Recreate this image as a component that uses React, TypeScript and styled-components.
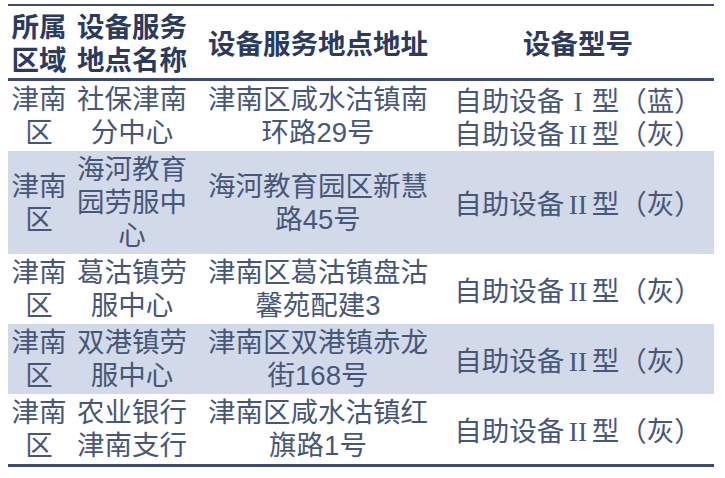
import React from 'react';
import styled, { createGlobalStyle } from 'styled-components';

const GlobalStyle = createGlobalStyle`
  html, body {
    margin: 0;
    padding: 0;
    background: #ffffff;
  }
`;

type Row = {
  area: string;
  name: string;
  address: string;
  models: string[];
  shaded?: boolean;
};

const rows: Row[] = [
  {
    area: '津南\n区',
    name: '社保津南\n分中心',
    address: '津南区咸水沽镇南\n环路29号',
    models: ['Ⅰ（蓝）', 'Ⅱ（灰）'],
  },
  {
    area: '津南\n区',
    name: '海河教育\n园劳服中\n心',
    address: '海河教育园区新慧\n路45号',
    models: ['Ⅱ（灰）'],
    shaded: true,
  },
  {
    area: '津南\n区',
    name: '葛沽镇劳\n服中心',
    address: '津南区葛沽镇盘沽\n馨苑配建3',
    models: ['Ⅱ（灰）'],
  },
  {
    area: '津南\n区',
    name: '双港镇劳\n服中心',
    address: '津南区双港镇赤龙\n街168号',
    models: ['Ⅱ（灰）'],
    shaded: true,
  },
  {
    area: '津南\n区',
    name: '农业银行\n津南支行',
    address: '津南区咸水沽镇红\n旗路1号',
    models: ['Ⅱ（灰）'],
  },
];

const ModelLine = ({ model }: { model: string }) => {
  const numeral = model[0] === 'Ⅰ' ? 'I' : 'II';
  const suffix = model.slice(1);
  return (
    <S.ModelLine>
      自助设备<S.Numeral>{numeral}</S.Numeral>型{suffix}
    </S.ModelLine>
  );
};

const App = () => {
  return (
    <S.Page>
      <GlobalStyle />
      <S.Table>
        <colgroup>
          <col style={{ width: 62 }} />
          <col style={{ width: 124 }} />
          <col style={{ width: 248 }} />
          <col style={{ width: 272 }} />
        </colgroup>
        <thead>
          <tr>
            <S.HeadCell>{'所属\n区域'}</S.HeadCell>
            <S.HeadCell>{'设备服务\n地点名称'}</S.HeadCell>
            <S.HeadCell>设备服务地点地址</S.HeadCell>
            <S.HeadCell>设备型号</S.HeadCell>
          </tr>
        </thead>
        <tbody>
          {rows.map((row, i) => (
            <S.BodyRow key={i} $shaded={row.shaded}>
              <S.Cell>{row.area}</S.Cell>
              <S.Cell>{row.name}</S.Cell>
              <S.Cell>{row.address}</S.Cell>
              <S.Cell>
                {row.models.map((m, j) => (
                  <ModelLine key={j} model={m} />
                ))}
              </S.Cell>
            </S.BodyRow>
          ))}
        </tbody>
      </S.Table>
    </S.Page>
  );
};

const S = {
  Page: styled.div`
    width: 725px;
    height: 478px;
    box-sizing: border-box;
    padding: 4px 11px 0 8px;
    background: #ffffff;
    overflow: hidden;
  `,
  Table: styled.table`
    width: 706px;
    table-layout: fixed;
    border-collapse: collapse;
    border-top: 2px solid #3d4b72;
    border-bottom: 3px solid #3d4b72;
    font-family: 'Liberation Sans', 'Noto Sans CJK SC', sans-serif;
  `,
  HeadCell: styled.th`
    padding: 3px 0;
    font-size: 27.5px;
    line-height: 33px;
    font-weight: 700;
    color: #2b3a5e;
    text-align: center;
    vertical-align: middle;
    white-space: pre-line;
    border-bottom: 3px solid #3d4b72;
    font-family: 'Noto Sans CJK SC', sans-serif;
  `,
  BodyRow: styled.tr<{ $shaded?: boolean }>`
    background: ${({ $shaded }) => ($shaded ? '#d2d9e8' : '#ffffff')};
  `,
  Cell: styled.td`
    padding: 2px 0;
    font-size: 27.5px;
    line-height: 33px;
    font-weight: 400;
    color: #46577a;
    text-align: center;
    vertical-align: middle;
    white-space: pre-line;
  `,
  ModelLine: styled.div`
    line-height: 33px;
    white-space: nowrap;
    font-family: 'Noto Sans CJK SC', sans-serif;
  `,
  Numeral: styled.span`
    display: inline-block;
    width: 1em;
    line-height: 1;
    text-align: center;
    font-family: 'Liberation Serif', serif;
  `,
};

export default App;
